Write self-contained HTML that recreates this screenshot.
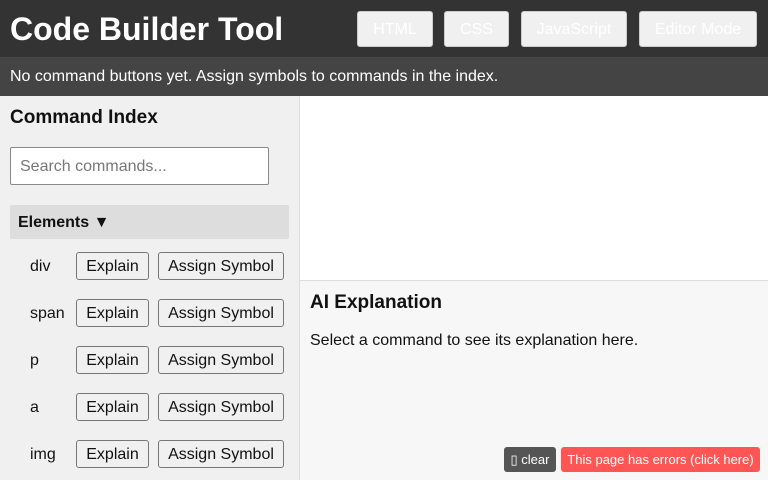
<!DOCTYPE html>
<html><head><style>
*{box-sizing:border-box;margin:0;padding:0}
body{width:768px;height:480px;overflow:hidden;font-family:"Liberation Sans",sans-serif;position:relative;background:#fff}
.hdr{position:absolute;left:0;top:0;width:768px;height:57px;background:#333}
.hdr h1{position:absolute;left:10px;top:11px;font-size:32px;color:#fff;font-weight:bold;line-height:37px}
.hb{position:absolute;top:11px;height:36px;background:#f0f0f0;border:1px solid #ccc;border-radius:3px;color:#fff;font-size:16px;text-align:center;line-height:35px}
.sub{position:absolute;left:0;top:57px;width:768px;height:39px;background:#444;color:#fff;font-size:16px;line-height:40px;padding-left:10px}
.side{position:absolute;left:0;top:96px;width:300px;height:384px;background:#f0f0f0;border-right:1px solid #ddd}
.side h2{position:absolute;left:10px;top:11px;font-size:19px;font-weight:bold;color:#111}
.search{position:absolute;left:10px;top:51px;width:259px;height:38px;background:#fff;border:1px solid #888;border-radius:2px;color:#777;font-size:16px;line-height:38px;padding-left:9px}
.cat{position:absolute;left:10px;top:109px;width:279px;height:34px;background:#ddd;border-radius:2px;font-weight:bold;font-size:16px;line-height:35px;padding-left:8px;color:#111}
.row{position:absolute;left:0;height:28px;width:300px;font-size:16px}
.row .l{position:absolute;left:30px;top:1px;line-height:28px;color:#111}
.row .b{position:absolute;top:0;height:28px;border:1px solid #777;border-radius:3px;background:#f0f0f0;line-height:27px;text-align:center;color:#111}
.main{position:absolute;left:300px;top:280px;width:468px;height:200px;background:#f7f7f7;border-top:1px solid #ddd}
.main h3{position:absolute;left:10px;top:11px;font-size:19px;font-weight:bold;color:#111}
.main p{position:absolute;left:10px;top:51px;font-size:16px;color:#111}
.clr{position:absolute;left:504px;top:447px;width:52px;height:25px;background:#555;color:#fff;border-radius:3px;font-size:13px;line-height:25px;text-align:center}
.err{position:absolute;left:561px;top:447px;width:199px;height:25px;background:#f55;color:#fff;border-radius:3px;font-size:13px;line-height:25px;text-align:center}
</style></head><body>
<div class="hdr"><h1>Code Builder Tool</h1>
<div class="hb" style="left:357px;width:76px">HTML</div>
<div class="hb" style="left:444px;width:65px">CSS</div>
<div class="hb" style="left:521px;width:106px">JavaScript</div>
<div class="hb" style="left:639px;width:118px">Editor Mode</div>
</div>
<div class="sub">No command buttons yet. Assign symbols to commands in the index.</div>
<div class="side"><h2>Command Index</h2>
<div class="search">Search commands...</div>
<div class="cat">Elements ▼</div>
</div>
<div class="row" style="top:252px"><span class="l">div</span><span class="b" style="left:76px;width:73px">Explain</span><span class="b" style="left:158px;width:126px">Assign Symbol</span></div>
<div class="row" style="top:299px"><span class="l">span</span><span class="b" style="left:76px;width:73px">Explain</span><span class="b" style="left:158px;width:126px">Assign Symbol</span></div>
<div class="row" style="top:346px"><span class="l">p</span><span class="b" style="left:76px;width:73px">Explain</span><span class="b" style="left:158px;width:126px">Assign Symbol</span></div>
<div class="row" style="top:393px"><span class="l">a</span><span class="b" style="left:76px;width:73px">Explain</span><span class="b" style="left:158px;width:126px">Assign Symbol</span></div>
<div class="row" style="top:440px"><span class="l">img</span><span class="b" style="left:76px;width:73px">Explain</span><span class="b" style="left:158px;width:126px">Assign Symbol</span></div>
<div class="main"><h3>AI Explanation</h3><p>Select a command to see its explanation here.</p></div>
<div class="clr">▯ clear</div>
<div class="err">This page has errors (click here)</div>
</body></html>
